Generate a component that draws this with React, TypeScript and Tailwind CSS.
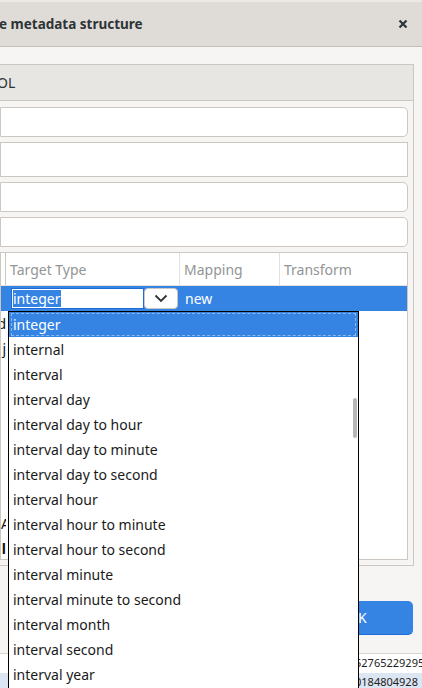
import React from 'react';

const types = [
  'integer',
  'internal',
  'interval',
  'interval day',
  'interval day to hour',
  'interval day to minute',
  'interval day to second',
  'interval hour',
  'interval hour to minute',
  'interval hour to second',
  'interval minute',
  'interval minute to second',
  'interval month',
  'interval second',
  'interval year',
  'json',
];

// first column is mostly scrolled off to the left, only the tail of each name shows
const firstCol = ['d', 'j', '', '', '', '', '', '', 'A', 'l', '', ''];

const Dropdown = () => (
  <div className="absolute left-[8px] top-[311px] w-[351px] h-[420px] bg-white border border-black">
    <div className="flex flex-col">
      {types.map((t, i) =>
        i === 0 ? (
          <div key={t} className="h-[25px] bg-[#3584e4] px-[2px] py-[1px]">
            <div className="h-full border border-dashed border-[#8db7ee] flex items-center pl-[1px] text-white">
              {t}
            </div>
          </div>
        ) : (
          <div key={t} className="h-[25px] flex items-center pl-[4px] text-[#1a1a1a]">
            {t}
          </div>
        )
      )}
    </div>
    {/* scrollbar thumb */}
    <div className="absolute left-[344px] top-[86px] w-[4px] h-[40px] rounded-full bg-[#b6b8b6]" />
  </div>
);

export default function App() {
  return (
    <div
      className="relative w-[422px] h-[688px] overflow-hidden bg-[#f6f5f4] text-[14px] text-[#2e3436]"
      style={{ fontFamily: '"Noto Sans", "DejaVu Sans", sans-serif' }}
    >
      {/* title bar */}
      <div className="h-[47px] bg-[#dfdcd8] border-t-2 border-t-[#ebe9e6] border-b border-b-[#c3beb9] flex items-center justify-between pr-[14px]">
        <span className="font-bold text-[13.5px] text-[#2e3436] -ml-[1px]">e metadata structure</span>
        <svg width="10" height="10" viewBox="0 0 10 10" className="text-[#2e3436]">
          <path d="M1.5 1.5 L8.5 8.5 M8.5 1.5 L1.5 8.5" stroke="currentColor" strokeWidth="2.2" />
        </svg>
      </div>

      <div className="pt-[17px]">
        {/* frame */}
        <div className="w-[414px] border-t border-r border-b border-[#cdc7c2]">
          <div className="h-[36px] bg-[#e8e6e3] border-b border-[#cdc7c2] flex items-center">
            <span className="-ml-[3px] text-[#2e3436]">OL</span>
          </div>
          <div className="pt-[6px] pr-[5px] pb-[5px] flex flex-col gap-[5px]">
            <div className="h-[30px] bg-white border border-[#cdc7c2] rounded-r-[5px]" />
            <div className="h-[35px] bg-white border border-[#cdc7c2]" />
            <div className="h-[30px] bg-white border border-[#cdc7c2] rounded-r-[5px]" />
            <div className="h-[30px] bg-white border border-[#cdc7c2] rounded-r-[5px]" />

            {/* table */}
            <div className="h-[308px] bg-white border border-[#cdc7c2] overflow-hidden">
              <div className="h-[33px] flex border-b border-[#e4e1de] text-[#929595]">
                <div className="w-[5px] border-r border-[#cdc7c2]" />
                <div className="w-[174px] border-r border-[#e4e1de] flex items-center pl-[4px]">Target Type</div>
                <div className="w-[100px] border-r border-[#e4e1de] flex items-center pl-[4px]">Mapping</div>
                <div className="flex-1 flex items-center pl-[4px]">Transform</div>
              </div>
              <div className="h-[25px] bg-[#3584e4] flex items-center text-white">
                <div className="w-[5px]" />
                <div className="w-[174px] flex items-center pl-[5px]">
                  <div className="w-[133px] h-[21px] bg-white border border-[#1c6ed6] flex items-center pl-[1px]">
                    <span className="bg-[#3584e4] text-white leading-[17px]">integer</span>
                  </div>
                  <div className="w-[34px] h-[21px] bg-white border border-[#cdc7c2] rounded-[4px] flex items-center justify-center">
                    <svg width="14" height="9" viewBox="0 0 14 9">
                      <path d="M1.5 1.5 L7 7 L12.5 1.5" fill="none" stroke="#2e3436" strokeWidth="1.8" />
                    </svg>
                  </div>
                </div>
                <div className="pl-[5px]">new</div>
              </div>
              <div className="flex flex-col">
                {firstCol.map((c, i) => (
                  <div key={i} className="h-[25px] flex items-center">
                    <div
                      className={`w-[5px] overflow-hidden flex justify-end text-[#111] ${i === 9 ? 'font-bold' : ''}`}
                    >
                      <span className={i === 8 ? '-mr-[4px]' : ''}>{c}</span>
                    </div>
                  </div>
                ))}
              </div>
            </div>
          </div>
        </div>

        {/* buttons */}
        <div className="pt-[35px] flex justify-end pr-[9px]">
          <div className="w-[100px] h-[34px] rounded-[5px] bg-[#3584e4] border-b border-[#1c6ed6] flex items-center pl-[34px] text-white">
            OK
          </div>
        </div>

        {/* result grid under the dialog */}
        <div className="mt-[18px] border-t border-[#d8d4d0]">
          <div className="h-[19px] bg-white flex items-center pl-[355px] text-[11px] text-[#222] whitespace-nowrap">
            52765229295
          </div>
          <div className="h-[18px] bg-[#dce6f3] flex items-center pl-[355px] text-[11px] text-[#222] whitespace-nowrap">
            0184804928
          </div>
        </div>
      </div>

      <Dropdown />
    </div>
  );
}
